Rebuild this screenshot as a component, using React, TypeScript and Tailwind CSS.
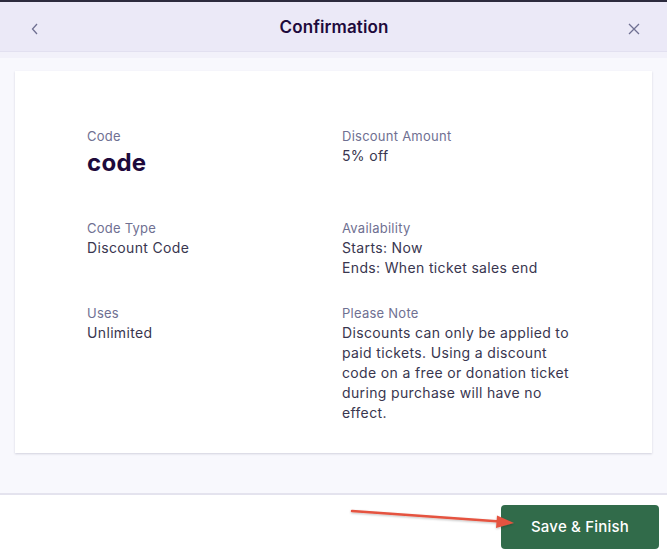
import React from "react";

function Label({ children }: { children: React.ReactNode }) {
  return <div className="text-[13px] leading-[19px] tracking-[0.25px] text-[#6f7092]">{children}</div>;
}
function Value({ children }: { children: React.ReactNode }) {
  return <div className="text-[14px] leading-[20px] tracking-[0.35px] text-[#39364f]">{children}</div>;
}

export default function App() {
  return (
    <div className="relative w-[667px] h-[555px] overflow-hidden bg-white flex flex-col" style={{ fontFamily: "Inter, 'Noto Sans', sans-serif" }}>
      <div className="h-[2px] bg-[#2c2b3d]" />
      <div className="h-[50px] bg-[#ebe9f7] flex items-center justify-between px-[29px] border-b border-[#e2e0f0]">
        <svg width="12" height="14" viewBox="0 0 12 14" className="mt-[4px]">
          <path d="M8 2 L3.5 7 L8 12" fill="none" stroke="#6f7092" strokeWidth="1.3" />
        </svg>
        <div className="text-[17px] font-semibold text-[#1e0a3c] tracking-[0.1px] mt-[3px]">Confirmation</div>
        <svg width="14" height="14" viewBox="0 0 14 14" className="mt-[4px] mr-[-3px]">
          <path d="M2 2 L12 12 M12 2 L2 12" fill="none" stroke="#6f7092" strokeWidth="1.3" />
        </svg>
      </div>
      <div className="h-[6px] bg-[#f2f1fa]" />
      <div className="flex-1 bg-[#f8f8fd] px-[15px] pt-[13px] border-b-[2px] border-[#e4e3ee]">
        <div className="bg-white h-[382px] shadow-[0_1px_2px_rgba(40,40,80,0.18)] pl-[72px] pt-[56px]">
          <div className="grid grid-cols-[255px_1fr]">
            <div>
              <Label>Code</Label>
              <div className="text-[24px] leading-[34px] font-bold text-[#1e0a3c] tracking-[0.3px]">code</div>
            </div>
            <div>
              <Label>Discount Amount</Label>
              <Value>5% off</Value>
            </div>
            <div className="mt-[39px]">
              <Label>Code Type</Label>
              <Value>Discount Code</Value>
            </div>
            <div className="mt-[39px]">
              <Label>Availability</Label>
              <Value>Starts: Now</Value>
              <Value>Ends: When ticket sales end</Value>
            </div>
            <div className="mt-[26px]">
              <Label>Uses</Label>
              <Value>Unlimited</Value>
            </div>
            <div className="mt-[26px] w-[234px]">
              <Label>Please Note</Label>
              <Value>Discounts can only be applied to paid tickets. Using a discount code on a free or donation ticket during purchase will have no effect.</Value>
            </div>
          </div>
        </div>
      </div>
      <div className="h-[60px] bg-white flex items-start justify-end pr-[8px] pt-[10px]">
        <button className="w-[158px] h-[44px] rounded-[4px] bg-[#316b4a] text-white text-[15px] font-medium tracking-[0.2px]">Save &amp; Finish</button>
      </div>
      <svg className="absolute left-0 top-0 pointer-events-none" width="667" height="555">
        <defs>
          <filter id="sh" x="-10%" y="-50%" width="120%" height="200%">
            <feDropShadow dx="0" dy="1" stdDeviation="1" floodColor="#000" floodOpacity="0.25" />
          </filter>
        </defs>
        <g filter="url(#sh)">
          <line x1="352" y1="511" x2="500" y2="521.5" stroke="#e5533f" strokeWidth="2.5" strokeLinecap="round" />
          <polygon points="514,523 497,515.5 496,528" fill="#e5533f" />
        </g>
      </svg>
    </div>
  );
}
